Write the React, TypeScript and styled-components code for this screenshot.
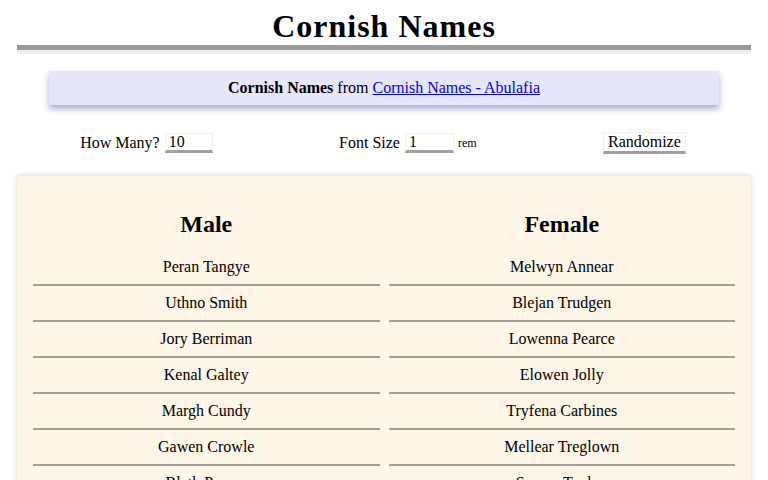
import React from "react";
import styled, { createGlobalStyle } from "styled-components";

const Global = createGlobalStyle`
  html, body { margin: 0; padding: 0; background: #ffffff; }
  body { font-family: "Liberation Serif", "Times New Roman", serif; font-size: 16px; color: #000; }
`;

const Page = styled.div`
  padding: 8px 17px 0 17px;
`;

const Title = styled.h1`
  margin: 0;
  font-size: 32px;
  line-height: 37px;
  font-weight: bold;
  text-align: center;
  letter-spacing: 1px;
  border-bottom: 5px solid #999999;
  box-shadow: 0 4px 0 #eeeeee;
`;

const Citation = styled.div`
  margin: 21px 32px 0 32px;
  background: #e6e6fa;
  padding: 8px 0 8px;
  line-height: 18px;
  text-align: center;
  box-shadow: 0 4px 6px rgba(110, 100, 190, 0.55);
`;

const Link = styled.a`
  color: #0000ee;
  text-decoration: underline;
`;

const Controls = styled.div`
  display: flex;
  justify-content: space-around;
  align-items: center;
  margin-top: 28px;
  height: 20px;
`;

const Control = styled.label`
  display: flex;
  align-items: center;
  gap: 5px;
  line-height: 18px;
`;

const Field = styled.input`
  box-sizing: border-box;
  width: ${(p: { $w: number }) => p.$w}px;
  height: 20px;
  font-family: "Liberation Serif", serif;
  font-size: 16px;
  padding: 0 3px;
  border: 1px solid #f0f0f0;
  border-bottom: 3px solid #a0a0a0;
  background: #fff;
  outline: none;
`;

const Unit = styled.span`
  font-size: 12px;
  margin-left: -1px;
`;

const Button = styled.button`
  box-sizing: border-box;
  height: 22px;
  padding: 0 4px;
  font-family: "Liberation Serif", serif;
  font-size: 16px;
  background: #fff;
  border: 1px solid #f0f0f0;
  border-bottom: 3px solid #a0a0a0;
  margin-right: 2px;
`;

const Card = styled.div`
  margin-top: 23px;
  background: #fdf5e6;
  box-shadow: 0 0 6px rgba(190, 160, 110, 0.45);
  padding: 16px 16px 0;
  display: grid;
  grid-template-columns: 1fr 1fr;
  column-gap: 9px;
  min-height: 320px;
`;

const Column = styled.div`
  display: flex;
  flex-direction: column;
`;

const Heading = styled.h2`
  margin: 18px 0 12px;
  font-size: 24px;
  line-height: 28px;
  text-align: center;
  font-weight: bold;
`;

const NameRow = styled.div`
  padding: 8px 0;
  line-height: 18px;
  text-align: center;
  border-bottom: 2px solid #a39e98;
`;

const male = [
  "Peran Tangye",
  "Uthno Smith",
  "Jory Berriman",
  "Kenal Galtey",
  "Margh Cundy",
  "Gawen Crowle",
  "Bleth Pearce",
];
const female = [
  "Melwyn Annear",
  "Blejan Trudgen",
  "Lowenna Pearce",
  "Elowen Jolly",
  "Tryfena Carbines",
  "Mellear Treglown",
  "Senara Tucker",
];

export default function App() {
  return (
    <>
      <Global />
      <Page>
        <Title>Cornish Names</Title>
        <Citation>
          <b>Cornish Names</b> from <Link href="#">Cornish Names - Abulafia</Link>
        </Citation>
        <Controls>
          <Control>
            How Many? <Field $w={48} defaultValue="10" />
          </Control>
          <Control>
            Font Size <Field $w={49} defaultValue="1" /> <Unit>rem</Unit>
          </Control>
          <Button>Randomize</Button>
        </Controls>
        <Card>
          <Column>
            <Heading>Male</Heading>
            {male.map((n) => (
              <NameRow key={n}>{n}</NameRow>
            ))}
          </Column>
          <Column>
            <Heading>Female</Heading>
            {female.map((n) => (
              <NameRow key={n}>{n}</NameRow>
            ))}
          </Column>
        </Card>
      </Page>
    </>
  );
}
